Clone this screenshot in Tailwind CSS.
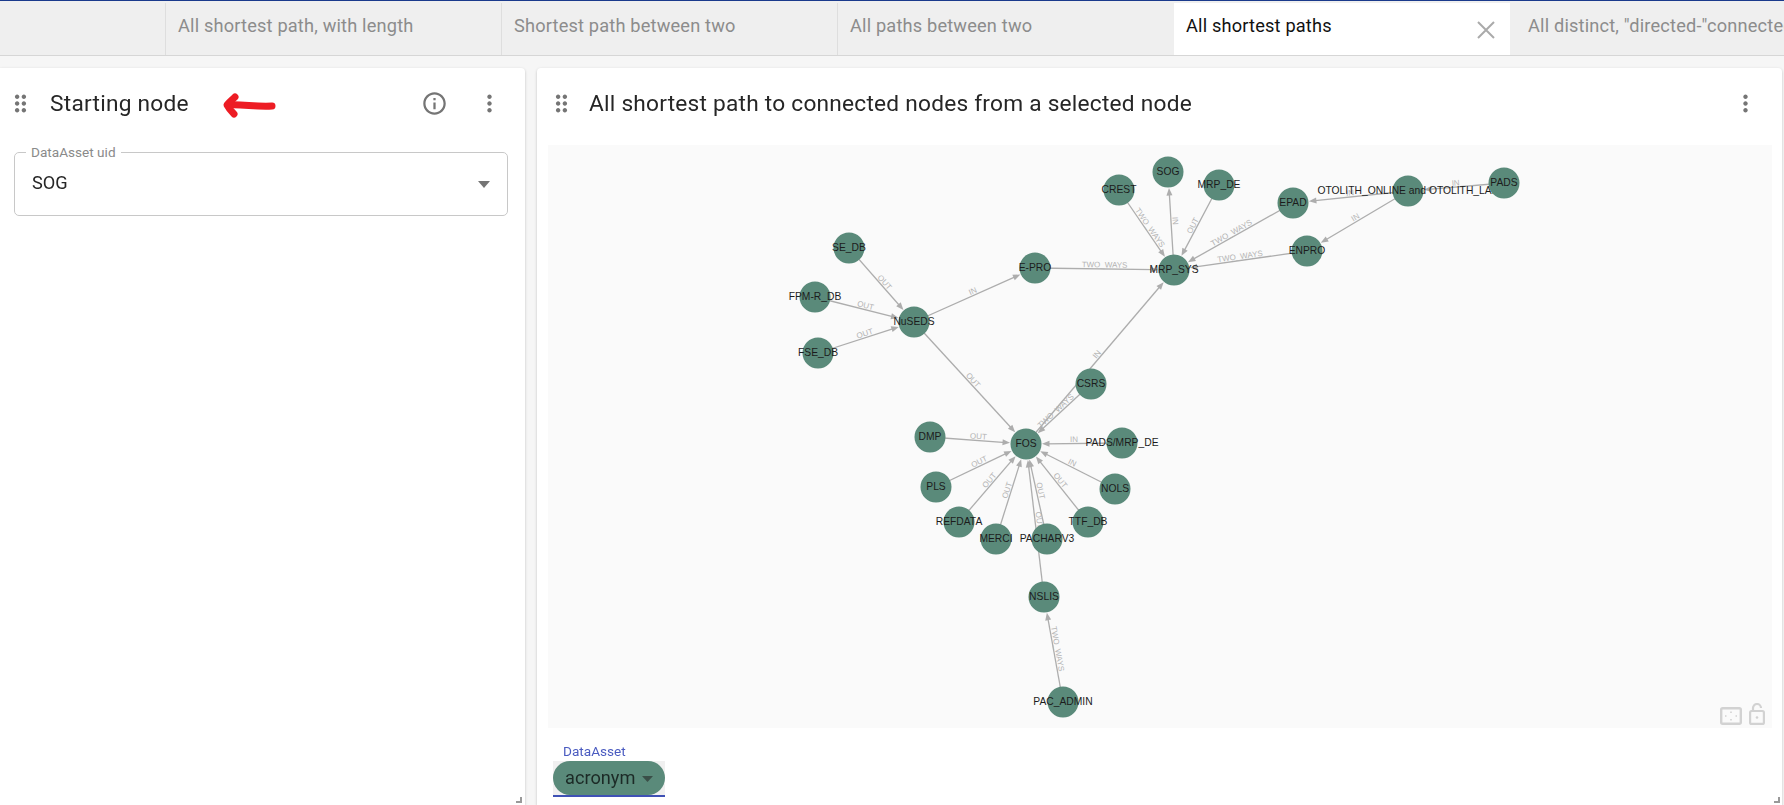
<!DOCTYPE html>
<html lang="en">
<head>
  <meta charset="UTF-8" />
  <title>All shortest paths</title>
  <script src="https://cdn.jsdelivr.net/npm/@tailwindcss/browser@4"></script>
</head>
<body class="bg-[#f6f6f6] font-['Roboto',sans-serif] text-[#262626]">
<div class="flex h-[805px] w-[1784px] flex-col overflow-hidden blur-[0.3px]">

  <!-- Tabs -->
  <div class="flex h-[56px] shrink-0 border-t border-b border-t-[#1a3a8c] border-b-[#d6d6d6] bg-[#efefef] pt-[2px] text-[18.2px] tracking-[0.18px] text-[#8c8c8c]">
    <div class="w-[166px] shrink-0 border-r border-[#dedede]"></div>
    <div class="flex w-[336px] shrink-0 items-center border-r border-[#dedede] pl-[12px] pb-[6px]">All shortest path, with length</div>
    <div class="flex w-[336px] shrink-0 items-center border-r border-[#dedede] pl-[12px] pb-[6px]">Shortest path between two</div>
    <div class="flex w-[336px] shrink-0 items-center pl-[12px] pb-[6px]">All paths between two</div>
    <div class="flex w-[336px] shrink-0 items-center justify-between bg-white pr-[15px] pl-[12px] pb-[6px] text-[#111]">
      <span>All shortest paths</span>
      <svg class="mt-[8px] h-[18px] w-[18px]" viewBox="0 0 18 18" fill="none" stroke="#aaaaaa" stroke-width="2"><path d="M1 1l16 16M17 1L1 17" /></svg>
    </div>
    <div class="flex min-w-0 flex-1 items-center overflow-hidden pl-[18px] pb-[6px] whitespace-nowrap">All distinct, "directed-"connected paths</div>
  </div>

  <!-- Widgets -->
  <div class="flex min-h-0 flex-1 gap-[12px] pt-[12px] pr-[2px]">

    <!-- Starting node -->
    <div class="relative w-[525px] shrink-0 rounded-tr-[4px] bg-white shadow-[0_1px_3px_rgba(0,0,0,0.22)]">
      <div class="flex h-[70px] items-center pr-[22px] pl-[7px]">
        <svg class="h-[27px] w-[27px] text-[#757575]" viewBox="0 0 24 24" fill="currentColor"><path d="M11 18c0 1.1-.9 2-2 2s-2-.9-2-2 .9-2 2-2 2 .9 2 2zm-2-8c-1.1 0-2 .9-2 2s.9 2 2 2 2-.9 2-2-.9-2-2-2zm0-6c-1.1 0-2 .9-2 2s.9 2 2 2 2-.9 2-2-.9-2-2-2zm6 4c1.1 0 2-.9 2-2s-.9-2-2-2-2 .9-2 2 .9 2 2 2zm0 2c-1.1 0-2 .9-2 2s.9 2 2 2 2-.9 2-2-.9-2-2-2zm0 6c-1.1 0-2 .9-2 2s.9 2 2 2 2-.9 2-2-.9-2-2-2z" /></svg>
        <h2 class="mt-[2px] ml-[16px] text-[22.7px] leading-none tracking-[0.25px]">Starting node</h2>
        <svg class="mt-[3px] ml-[31px] h-[30px] w-[60px]" viewBox="0 0 60 30" fill="none" stroke="#ed1c24" stroke-linecap="round" stroke-linejoin="round"><path d="M8 15C22 14 36 17 52 16" stroke-width="7" /><path d="M15 7C12 10 9 12 7 15 9 19 11 21 14 24" stroke-width="7" /></svg>
        <svg class="ml-auto h-[27px] w-[27px] text-[#757575]" viewBox="0 0 24 24" fill="currentColor"><path d="M11 7h2v2h-2zm0 4h2v6h-2zm1-9C6.48 2 2 6.48 2 12s4.48 10 10 10 10-4.48 10-10S17.52 2 12 2zm0 18c-4.41 0-8-3.59-8-8s3.59-8 8-8 8 3.59 8 8-3.59 8-8 8z" /></svg>
        <svg class="ml-[28px] h-[27px] w-[27px] text-[#757575]" viewBox="0 0 24 24" fill="currentColor"><path d="M12 8c1.1 0 2-.9 2-2s-.9-2-2-2-2 .9-2 2 .9 2 2 2zm0 2c-1.1 0-2 .9-2 2s.9 2 2 2 2-.9 2-2-.9-2-2-2zm0 6c-1.1 0-2 .9-2 2s.9 2 2 2 2-.9 2-2-.9-2-2-2z" /></svg>
      </div>
      <div class="relative mt-[14px] ml-[14px] flex h-[64px] w-[494px] items-center justify-between rounded-[5px] border border-[#c8c8c8] pr-[17px] pl-[17px]">
        <span class="absolute -top-[9px] left-[11px] bg-white px-[5px] text-[13.6px] leading-[16px] text-[#8a8a8a]">DataAsset uid</span>
        <span class="-mt-[2px] text-[18.2px]">SOG</span>
        <svg class="h-[7px] w-[12px]" viewBox="0 0 12 7" fill="#757575"><path d="M0 0h12L6 7z" /></svg>
      </div>
      <span class="absolute right-[3px] bottom-[2px] h-[6px] w-[6px] border-r-2 border-b-2 border-[#999]"></span>
    </div>

    <!-- Graph -->
    <div class="relative min-w-0 flex-1 rounded-t-[4px] bg-white px-[11px] shadow-[0_1px_3px_rgba(0,0,0,0.22)]">
      <div class="flex h-[70px] items-center pr-[12px]">
        <svg class="h-[27px] w-[27px] text-[#757575]" viewBox="0 0 24 24" fill="currentColor"><path d="M11 18c0 1.1-.9 2-2 2s-2-.9-2-2 .9-2 2-2 2 .9 2 2zm-2-8c-1.1 0-2 .9-2 2s.9 2 2 2 2-.9 2-2-.9-2-2-2zm0-6c-1.1 0-2 .9-2 2s.9 2 2 2 2-.9 2-2-.9-2-2-2zm6 4c1.1 0 2-.9 2-2s-.9-2-2-2-2 .9-2 2 .9 2 2 2zm0 2c-1.1 0-2 .9-2 2s.9 2 2 2 2-.9 2-2-.9-2-2-2zm0 6c-1.1 0-2 .9-2 2s.9 2 2 2 2-.9 2-2-.9-2-2-2z" /></svg>
        <h2 class="mt-[2px] ml-[14px] text-[22.7px] leading-none tracking-[0.23px]">All shortest path to connected nodes from a selected node</h2>
        <svg class="ml-auto h-[27px] w-[27px] text-[#757575]" viewBox="0 0 24 24" fill="currentColor"><path d="M12 8c1.1 0 2-.9 2-2s-.9-2-2-2-2 .9-2 2 .9 2 2 2zm0 2c-1.1 0-2 .9-2 2s.9 2 2 2 2-.9 2-2-.9-2-2-2zm0 6c-1.1 0-2 .9-2 2s.9 2 2 2 2-.9 2-2-.9-2-2-2z" /></svg>
      </div>
      <div class="relative mt-[7px] h-[583px] w-[1224px] bg-[#fafafa]">
        <svg id="graph" class="block h-[583px] w-[1224px]" viewBox="548 145 1224 583" font-family="'Liberation Sans', Arial, sans-serif"></svg>
        <svg class="absolute right-[30px] bottom-[3px] h-[18px] w-[22px]" viewBox="0 0 22 18" fill="none" stroke="#d2d2d2" stroke-width="2.4"><rect x="1.2" y="1.2" width="19.6" height="15.6" rx="1.5" /><path d="M11 4.500v1.500M11 12v1.500M5 9h1.500M15.500 9H17" stroke-width="1.6" /></svg>
        <svg class="absolute right-[7px] bottom-[3px] h-[22px] w-[16px]" viewBox="0 0 16 22" fill="none" stroke="#d2d2d2" stroke-width="2.2"><rect x="1.100" y="8" width="13.800" height="12.900" rx="1.5" /><path d="M4 8V5a4 4 0 0 1 8 0" /><circle cx="8" cy="14.500" r="1.300" fill="#d2d2d2" stroke="none" /></svg>
      </div>
      <div class="mt-[15px] ml-[5px] w-[112px]">
        <div class="pl-[10px] text-[13.6px] leading-[16px] text-[#4a5bc0]">DataAsset</div>
        <div class="mt-[2px] border-b-2 border-[#3f51b5] bg-[#f0f0f0]">
          <div class="flex h-[34px] items-center justify-between rounded-full bg-[#5a8a7a] pr-[12px] pl-[12px] text-[18.2px] text-[#1c2a26]">
            <span>acronym</span>
            <svg class="mt-[2px] h-[6px] w-[11px]" viewBox="0 0 11 6" fill="#3a4f48"><path d="M0 0h11L5.500 6z" /></svg>
          </div>
        </div>
      </div>
      <span class="absolute right-[2px] bottom-[2px] h-[6px] w-[6px] border-r-2 border-b-2 border-[#999]"></span>
    </div>
  </div>
</div>

<script>
  // node positions are screen coordinates, the viewBox of #graph maps them
  var nodes = {
    "PADS/MRP_DE": [1122, 443], "CSRS": [1091, 384], "CREST": [1119, 190], "SOG": [1168, 172],
    "MRP_DE": [1219, 185], "EPAD": [1293, 203], "ENPRO": [1307, 251], "MRP_SYS": [1174, 270],
    "E-PRO": [1035, 268], "SE_DB": [849, 248], "FPM-R_DB": [815, 297], "FSE_DB": [818, 353],
    "NuSEDS": [914, 322], "DMP": [930, 437], "PLS": [936, 487], "REFDATA": [959, 522],
    "MERCI": [996, 539], "PACHARV3": [1047, 539], "TTF_DB": [1088, 522], "NOLS": [1115, 489],
    "FOS": [1026, 444], "NSLIS": [1044, 597], "PAC_ADMIN": [1063, 702],
    "OTOLITH_ONLINE and OTOLITH_LAB": [1408, 191], "PADS": [1504, 183]
  };
  var edges = [
    ["SE_DB", "NuSEDS", "OUT"], ["FPM-R_DB", "NuSEDS", "OUT"], ["FSE_DB", "NuSEDS", "OUT"],
    ["NuSEDS", "E-PRO", "IN"], ["NuSEDS", "FOS", "OUT"], ["E-PRO", "MRP_SYS", "TWO_WAYS"],
    ["CREST", "MRP_SYS", "TWO_WAYS"], ["MRP_SYS", "SOG", "IN"], ["MRP_DE", "MRP_SYS", "OUT"],
    ["EPAD", "MRP_SYS", "TWO_WAYS"], ["ENPRO", "MRP_SYS", "TWO_WAYS"],
    ["OTOLITH_ONLINE and OTOLITH_LAB", "EPAD", "IN"], ["OTOLITH_ONLINE and OTOLITH_LAB", "ENPRO", "IN"],
    ["PADS", "OTOLITH_ONLINE and OTOLITH_LAB", "IN"], ["FOS", "MRP_SYS", "IN"],
    ["CSRS", "FOS", "TWO_WAYS"], ["DMP", "FOS", "OUT"], ["PLS", "FOS", "OUT"], ["REFDATA", "FOS", "OUT"],
    ["MERCI", "FOS", "OUT"], ["PACHARV3", "FOS", "OUT"], ["NSLIS", "FOS", "OUT"], ["TTF_DB", "FOS", "OUT"],
    ["NOLS", "FOS", "IN"], ["PADS/MRP_DE", "FOS", "IN"], ["PAC_ADMIN", "NSLIS", "TWO_WAYS"]
  ];
  var svg = document.getElementById("graph");
  function add(tag, attrs, text) {
    var el = document.createElementNS("http://www.w3.org/2000/svg", tag);
    for (var k in attrs) el.setAttribute(k, attrs[k]);
    if (text) el.textContent = text;
    svg.appendChild(el);
  }
  edges.forEach(function (e) {
    var a = nodes[e[0]], b = nodes[e[1]];
    var dx = b[0] - a[0], dy = b[1] - a[1], len = Math.hypot(dx, dy);
    var ux = dx / len, uy = dy / len;
    var tx = b[0] - ux * 16, ty = b[1] - uy * 16;
    add("line", { x1: a[0], y1: a[1], x2: tx - ux * 4, y2: ty - uy * 4, stroke: "#adadad", "stroke-width": 1.3 });
    var bx = tx - ux * 7.5, by = ty - uy * 7.5;
    add("polygon", {
      points: tx + "," + ty + " " + (bx - uy * 3) + "," + (by + ux * 3) + " " + (bx + uy * 3) + "," + (by - ux * 3),
      fill: "#adadad"
    });
    var deg = Math.atan2(dy, dx) * 180 / Math.PI;
    if (deg > 90) deg -= 180;
    if (deg <= -90) deg += 180;
    var mx = (a[0] + b[0]) / 2, my = (a[1] + b[1]) / 2;
    add("text", {
      x: 0, y: -1.5, "text-anchor": "middle", "font-size": 8, fill: "#b4b4b4",
      transform: "translate(" + mx + " " + my + ") rotate(" + deg + ")"
    }, e[2]);
  });
  // circle and label together, so a later circle can cover a long label
  Object.keys(nodes).forEach(function (name) {
    var p = nodes[name];
    add("circle", { cx: p[0], cy: p[1], r: 15.5, fill: "#5a8a7a" });
    add("text", { x: p[0], y: p[1] + 3, "text-anchor": "middle", "font-size": 10.3, fill: "#1c1c1c" }, name);
  });
</script>
</body>
</html>
